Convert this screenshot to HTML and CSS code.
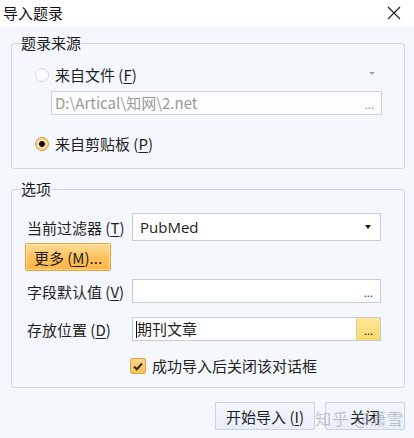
FILE: index.html
```html
<!DOCTYPE html>
<html lang="zh">
<head>
<meta charset="utf-8">
<title>导入题录</title>
<link rel="stylesheet" href="styles.css">
</head>
<body>
<div class="dialog">
  <div class="titlebar">
    <span class="title">导入题录</span>
    <svg class="close" width="14" height="14" viewBox="0 0 14 14"><path d="M1 1 L13 13 M13 1 L1 13" stroke="#222" stroke-width="1.1" fill="none"/></svg>
  </div>
  <div class="content">
    <fieldset class="group g1">
      <legend>题录来源</legend>
      <div class="radio-row first">
        <span class="radio"></span>
        <span class="lbl">来自文件 (<u>F</u>)</span>
        <span class="tri-light"></span>
      </div>
      <div class="field path">
        <span class="path-text">D:\Artical\知网\2.net</span>
        <span class="dots gray">...</span>
      </div>
      <div class="radio-row second">
        <span class="radio checked"></span>
        <span class="lbl">来自剪贴板 (<u>P</u>)</span>
      </div>
    </fieldset>

    <fieldset class="group g2">
      <legend>选项</legend>
      <div class="row r-filter">
        <span class="label">当前过滤器 (<u>T</u>)</span>
        <div class="field select">
          <span class="val latin">PubMed</span>
          <span class="tri-dark"></span>
        </div>
      </div>
      <div class="more-wrap">
        <span class="btn-more">更多 (<u>M</u>)...</span>
      </div>
      <div class="row r-default">
        <span class="label">字段默认值 (<u>V</u>)</span>
        <div class="field input">
          <span class="val"></span>
          <span class="dots">...</span>
        </div>
      </div>
      <div class="row r-store">
        <span class="label">存放位置 (<u>D</u>)</span>
        <div class="field input store">
          <span class="val"><span class="caret"></span>期刊文章</span>
          <span class="ybtn">...</span>
        </div>
      </div>
      <div class="check-row">
        <span class="checkbox"><svg width="10" height="9" viewBox="0 0 10 9"><path d="M1 4.5 L3.8 7.2 L9 1.5" stroke="#3a2a10" stroke-width="2" fill="none"/></svg></span>
        <span class="lbl">成功导入后关闭该对话框</span>
      </div>
    </fieldset>

    <div class="actions">
      <span class="btn btn-start">开始导入 (<u>I</u>)</span>
      <span class="btn btn-close">关闭</span>
      <span class="watermark">知乎 @潇雪</span>
    </div>
  </div>
</div>
</body>
</html>
```
FILE: styles.css
```css
* { box-sizing: border-box; }
html, body { margin: 0; padding: 0; }
body {
  width: 414px;
  height: 438px;
  font-family: "Noto Sans CJK SC", "Noto Sans", sans-serif;
  font-size: 15px;
  color: #1e1e1e;
  background: #f4f8fc;
  overflow: hidden;
}
u { text-decoration: underline; text-underline-offset: 2px; }
.dialog { width: 414px; height: 438px; display: flex; flex-direction: column; }
.titlebar {
  height: 27px;
  background: #ffffff;
  display: flex;
  align-items: center;
  justify-content: space-between;
  padding: 0 13px 1px 3px;
  line-height: 20px;
}
.title { font-size: 15px; color: #111; }
.close { display: block; margin-top: -1px; }
.content {
  flex: 1;
  padding: 6px 9px 0 11px;
  position: relative;
}
.group {
  margin: 0;
  padding: 0;
  border: 1px solid #c9d7e7;
  border-radius: 3px;
  min-width: 0;
}
.group legend {
  margin-left: 9px;
  padding: 0;
  line-height: 20px;
  font-size: 15px;
  color: #1a1a1a;
}
.g2 { margin-top: 10px; }

.radio-row { display: flex; align-items: center; height: 20px; padding-left: 23px; }
.radio-row.first { margin-top: 12px; }
.radio-row.second { margin-top: 19px; margin-bottom: 14px; }
.radio {
  width: 14px; height: 14px; border-radius: 50%;
  border: 1px solid #d6dce3;
  background: #fbfcfd;
  position: relative;
  flex: none;
}
.radio.checked {
  border: 1px solid #d89a3c;
  background: radial-gradient(circle, #111 0 2.6px, #fbe0ae 3.2px, #f6c77a 100%);
}
.lbl { margin-left: 6px; line-height: 20px; }
.tri-light {
  margin-left: auto;
  margin-right: 29px;
  margin-top: -4px;
  width: 0; height: 0;
  border-left: 3px solid transparent;
  border-right: 3px solid transparent;
  border-top: 3px solid #a6a6a6;
}
.field {
  display: flex;
  align-items: center;
  background: #fff;
  border: 1px solid #c3ccd7;
}
.path {
  margin: 6px 0 0 39px;
  width: 331px;
  height: 24px;
  border-color: #cdd3da;
  background: #fdfdfd;
  padding: 0 7px 0 3px;
}
.path-text { color: #9a9a9a; font-size: 15px; line-height: 20px; }
.dots { margin-left: auto; font-size: 11px; color: #333; letter-spacing: 0; line-height: 10px; padding-top: 2px; }
.dots.gray { color: #8a8a8a; }

.row { display: flex; align-items: center; padding-left: 15px; }
.label { width: 105px; flex: none; white-space: nowrap; }
.r-filter { margin-top: 14px; }
.select { width: 249px; height: 28px; padding: 0 9px 0 7px; }
.val { line-height: 20px; display: flex; align-items: center; }
.latin { font-family: "Open Sans", "Noto Sans", sans-serif; font-size: 15px; }
.tri-dark {
  margin-left: auto;
  width: 0; height: 0;
  border-left: 3px solid transparent;
  border-right: 3px solid transparent;
  border-top: 4px solid #111;
}
.more-wrap { padding-left: 13px; margin-top: 2px; display: flex; }
.btn-more {
  width: 86px; height: 28px;
  display: flex; align-items: center; justify-content: center;
  border: 1px solid #e3a33c;
  border-radius: 2px;
  background: linear-gradient(#ffdc96, #ffc05c 55%, #ffb544);
  box-shadow: inset 0 0 0 1px rgba(255,240,200,0.5);
  font-size: 15px;
}
.r-default { margin-top: 8px; }
.input { width: 249px; height: 24px; padding: 0 7px 0 3px; }
.r-store { margin-top: 14px; }
.store { padding-right: 0; height: 24px; }
.caret { display: inline-block; width: 1px; height: 17px; background: #111; margin-right: 0; }
.ybtn {
  margin-left: auto;
  width: 24px; height: 22px;
  display: flex; align-items: center; justify-content: center;
  background: linear-gradient(#fde69a, #fbd86a);
  border-left: 1px solid #e6cf86;
  font-size: 11px; color: #222; line-height: 10px; padding-top: 2px;
}
.check-row { display: flex; align-items: center; height: 20px; margin: 15px 0 11px 118px; }
.checkbox {
  width: 16px; height: 16px;
  border: 1px solid #d9a74a;
  border-radius: 2px;
  background: linear-gradient(#fbd68a, #f6c35c);
  display: flex; align-items: center; justify-content: center;
  flex: none;
}
.check-row .lbl { margin-left: 6px; }

.actions {
  display: flex;
  justify-content: flex-end;
  gap: 10px;
  margin-top: 14px;
  position: relative;
}
.btn {
  height: 28px;
  display: flex; align-items: center; justify-content: center;
  border: 1px solid #c6d3e2;
  border-radius: 2px;
  background: linear-gradient(#f3f7fc, #e6eef8);
  font-size: 15px;
}
.btn-start { width: 100px; }
.btn-close { width: 80px; }
.watermark {
  position: absolute;
  right: 1px;
  top: 4px;
  font-size: 16px;
  color: rgba(150,150,150,0.55);
  letter-spacing: 1px;
  pointer-events: none;
}
```
